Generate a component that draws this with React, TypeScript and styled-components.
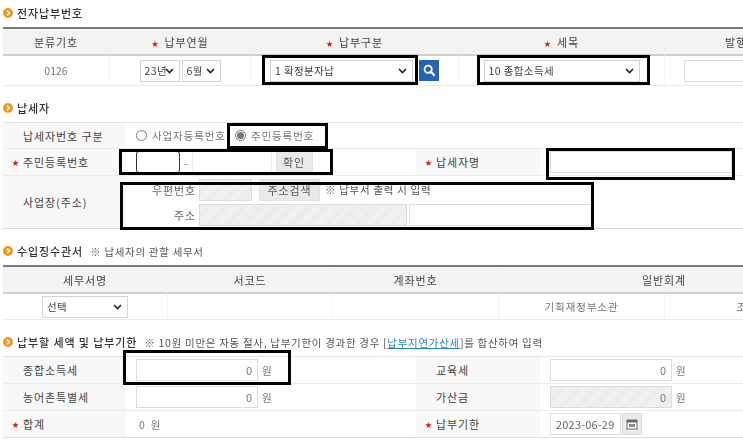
import React from "react";
import styled, { createGlobalStyle } from "styled-components";

const Global = createGlobalStyle`
  html, body { margin: 0; padding: 0; overflow: hidden; background: #fff; width: 743px; height: 442px; }
  * { box-sizing: border-box; }
`;

const Page = styled.div`
  position: relative;
  width: 743px;
  height: 442px;
  overflow: hidden;
  padding: 6px 0 0 3px;
  font-family: "Noto Sans CJK KR", "Noto Sans", sans-serif;
  font-size: 11px;
  letter-spacing: 0.9px;
  color: #666;
  filter: blur(0.35px);
`;

const Section = styled.section`
  width: 827px;
  margin-bottom: 15px;
`;

const Heading = styled.div`
  display: flex;
  align-items: center;
  height: 14px;
  margin-bottom: 7px;
  white-space: nowrap;
`;

const Bullet = styled.svg`
  width: 10px;
  height: 10px;
  margin-right: 4px;
  flex: none;
`;

const Title = styled.strong`
  font-size: 11px;
  font-weight: 500;
  color: #333;
  margin-right: 7px;
`;

const Note = styled.span`
  font-size: 10.5px;
  letter-spacing: 0.7px;
  color: #555;
`;

const Link = styled.a`
  color: #2b86b8;
  text-decoration: underline;
`;

const Table = styled.table<{ $strong?: boolean }>`
  width: 827px;
  table-layout: fixed;
  border-collapse: separate;
  border-spacing: 0;
  border-top: ${(p) => (p.$strong ? "2px solid #7b7b7b" : "1px solid #e3e3e3")};
`;

const Col = styled.col<{ $w: number }>`
  width: ${(p) => p.$w}px;
`;

const HeadCell = styled.th`
  height: 27px;
  padding: 0;
  background: #f4f3f2;
  border-bottom: 2px solid #cfcfcf;
  border-right: 1px solid #efefef;
  font-size: 11px;
  font-weight: 400;
  color: #444;
  text-align: center;
`;

const BodyCell = styled.td<{ $h?: number }>`
  height: ${(p) => p.$h ?? 30}px;
  padding: 0;
  border-bottom: 1px solid #ececec;
  border-right: 1px solid #f5f5f5;
  text-align: center;
  font-size: 10.5px;
  color: #777;
`;

const CodeText = styled.span`
  letter-spacing: 0;
`;

const RowHead = styled.th<{ $h?: number; $end?: boolean }>`
  height: ${(p) => p.$h ?? 27}px;
  padding: 0 0 0 20px;
  position: relative;
  background: #f8f8f8;
  border-bottom: 1px solid ${(p) => (p.$end ? "#dcdcdc" : "#ececec")};
  font-size: 11px;
  font-weight: 400;
  color: #444;
  text-align: left;
`;

const RowCell = styled.td<{ $end?: boolean }>`
  padding: 0 0 0 10px;
  border-bottom: 1px solid ${(p) => (p.$end ? "#dcdcdc" : "#ececec")};
  color: #777;
  font-size: 10.5px;
`;

const Inline = styled.div<{ $gap?: number }>`
  display: flex;
  align-items: center;
  gap: ${(p) => p.$gap ?? 2}px;
  white-space: nowrap;
`;

const Centered = styled(Inline)`
  justify-content: center;
`;

const Star = styled.span<{ $inline?: boolean }>`
  color: #d9161c;
  font-size: 7px;
  margin-right: 5px;
  vertical-align: 1px;
  ${(p) => (p.$inline ? "" : "position: absolute; left: 9px; top: 50%; transform: translateY(-50%); margin: 0;")}
`;

const chevron =
  "url(\"data:image/svg+xml,%3Csvg xmlns='http://www.w3.org/2000/svg' width='9' height='6'%3E%3Cpath d='M1 1l3.5 3.5L8 1' fill='none' stroke='%23222' stroke-width='1.6'/%3E%3C/svg%3E\")";

const Select = styled.select<{ $w: number; $shift?: number }>`
  appearance: none;
  width: ${(p) => p.$w}px;
  height: 22px;
  margin-left: ${(p) => p.$shift ?? 0}px;
  border: 1px solid #d4d4d4;
  border-radius: 0;
  background: #fff ${chevron} no-repeat right 5px center;
  font-family: inherit;
  font-size: 10.5px;
  letter-spacing: 0.4px;
  color: #444;
  padding: 0 0 0 4px;
  outline: none;
`;

const TextBox = styled.div<{ $w: number; $focus?: boolean; $hatch?: boolean; $plain?: boolean; $shift?: number }>`
  width: ${(p) => p.$w}px;
  height: 22px;
  margin-left: ${(p) => p.$shift ?? 0}px;
  flex: none;
  display: flex;
  align-items: center;
  justify-content: flex-end;
  padding-right: 4px;
  font-size: 11px;
  color: #777;
  border: ${(p) => (p.$focus ? "1px solid #333" : p.$plain ? "1px solid #eee" : "1px solid #dcdcdc")};
  border-radius: ${(p) => (p.$focus ? "3px" : "0")};
  background: ${(p) =>
    p.$hatch
      ? "repeating-linear-gradient(135deg, #f4f4f4 0 1px, #e9e9e9 1px 2px)"
      : "#fff"};
`;

const DateBox = styled(TextBox)`
  justify-content: flex-start;
  padding: 0 0 0 5px;
  color: #666;
  letter-spacing: 0.2px;
`;

const GrayButton = styled.div<{ $w: number }>`
  width: ${(p) => p.$w}px;
  height: 22px;
  flex: none;
  display: flex;
  align-items: center;
  justify-content: center;
  background: #e9e9e9;
  border: 1px solid #e2e2e2;
  font-size: 11px;
  color: #555;
`;

const IconButton = styled.div`
  width: 20px;
  height: 21px;
  flex: none;
  display: flex;
  align-items: center;
  justify-content: center;
  background: #2862b2;
`;

const CalendarButton = styled(GrayButton)`
  background: #eaeaea;
  border-color: #dcdcdc;
`;

const Radio = styled.span<{ $on?: boolean }>`
  width: 11px;
  height: 11px;
  flex: none;
  border-radius: 50%;
  border: 1px solid #777;
  background: #fff;
  display: inline-flex;
  align-items: center;
  justify-content: center;
  &::after {
    content: "";
    width: 7px;
    height: 7px;
    border-radius: 50%;
    background: ${(p) => (p.$on ? "#777" : "transparent")};
  }
`;

const RadioLabel = styled.span`
  margin: 0 9px 0 5px;
  color: #777;
`;

const AddressGrid = styled.div`
  display: grid;
  grid-template-columns: 73px 1fr;
  row-gap: 3px;
  align-items: center;
  margin-left: -10px;
`;

const AddressLabel = styled.span`
  text-align: right;
  padding-right: 3px;
  color: #666;
  font-size: 11px;
`;

const Unit = styled.span`
  color: #777;
  margin-left: 2px;
`;

const Dash = styled.span`
  margin-right: -1px;
`;

const AddressNote = styled(Note)`
  margin-left: -2px;
`;

const Total = styled(Inline)`
  padding-left: 3px;
`;

const Mark = styled.div<{ $x: number; $y: number; $w: number; $h: number }>`
  position: absolute;
  left: ${(p) => p.$x}px;
  top: ${(p) => p.$y}px;
  width: ${(p) => p.$w}px;
  height: ${(p) => p.$h}px;
  border: 3px solid #000;
  pointer-events: none;
`;

const Dot = () => (
  <Bullet viewBox="0 0 10 10">
    <circle cx="5" cy="5" r="5" fill="#ee9a1f" />
    <path d="M4 2.6 6.4 5 4 7.4" fill="none" stroke="#fff" strokeWidth="1.5" />
  </Bullet>
);

const marks = [
  { x: 262, y: 55, w: 156, h: 30 },
  { x: 477, y: 55, w: 173, h: 30 },
  { x: 227, y: 123, w: 101, h: 26 },
  { x: 119, y: 149, w: 214, h: 26 },
  { x: 546, y: 148, w: 189, h: 32 },
  { x: 120, y: 182, w: 474, h: 48 },
  { x: 123, y: 350, w: 168, h: 35 },
];

export default function App() {
  return (
    <Page>
      <Global />
      <Section>
        <Heading>
          <Dot />
          <Title>전자납부번호</Title>
        </Heading>
        <Table $strong>
          <colgroup>
            <Col $w={107} />
            <Col $w={141} />
            <Col $w={208} />
            <Col $w={206} />
            <Col $w={165} />
          </colgroup>
          <thead>
            <tr>
              <HeadCell>분류기호</HeadCell>
              <HeadCell><Star $inline>★</Star>납부연월</HeadCell>
              <HeadCell><Star $inline>★</Star>납부구분</HeadCell>
              <HeadCell><Star $inline>★</Star>세목</HeadCell>
              <HeadCell>발행번호</HeadCell>
            </tr>
          </thead>
          <tbody>
            <tr>
              <BodyCell><CodeText>0126</CodeText></BodyCell>
              <BodyCell>
                <Centered>
                  <Select $w={40} defaultValue="23"><option value="23">23년</option></Select>
                  <Select $w={39} defaultValue="6"><option value="6">6월</option></Select>
                </Centered>
              </BodyCell>
              <BodyCell>
                <Inline $gap={6}>
                  <Select $w={143} $shift={19} defaultValue="1"><option value="1">1 확정분자납</option></Select>
                  <IconButton>
                    <svg width="13" height="13" viewBox="0 0 13 13">
                      <circle cx="5.2" cy="5.2" r="3.6" fill="none" stroke="#fff" strokeWidth="1.8" />
                      <path d="M8 8l3.6 3.6" stroke="#fff" strokeWidth="2.2" />
                    </svg>
                  </IconButton>
                </Inline>
              </BodyCell>
              <BodyCell>
                <Centered>
                  <Select $w={156} defaultValue="10"><option value="10">10 종합소득세</option></Select>
                </Centered>
              </BodyCell>
              <BodyCell>
                <Inline><TextBox $w={120} $shift={19} /></Inline>
              </BodyCell>
            </tr>
          </tbody>
        </Table>
      </Section>

      <Section>
        <Heading>
          <Dot />
          <Title>납세자</Title>
        </Heading>
        <Table>
          <colgroup>
            <Col $w={123} />
            <Col $w={290} />
            <Col $w={124} />
            <Col $w={290} />
          </colgroup>
          <tbody>
            <tr>
              <RowHead $h={26}>납세자번호 구분</RowHead>
              <RowCell colSpan={3}>
                <Inline $gap={0}>
                  <Radio />
                  <RadioLabel>사업자등록번호</RadioLabel>
                  <Radio $on />
                  <RadioLabel>주민등록번호</RadioLabel>
                </Inline>
              </RowCell>
            </tr>
            <tr>
              <RowHead $h={27}><Star>★</Star>주민등록번호</RowHead>
              <RowCell>
                <Inline $gap={4}>
                  <TextBox $w={44} $focus />
                  <Dash>-</Dash>
                  <TextBox $w={80} $plain />
                  <GrayButton $w={37}>확인</GrayButton>
                </Inline>
              </RowCell>
              <RowHead $h={27}><Star>★</Star>납세자명</RowHead>
              <RowCell>
                <TextBox $w={182} />
              </RowCell>
            </tr>
            <tr>
              <RowHead $h={53} $end>사업장(주소)</RowHead>
              <RowCell colSpan={3} $end>
                <AddressGrid>
                  <AddressLabel>우편번호</AddressLabel>
                  <Inline $gap={7}>
                    <TextBox $w={53} $hatch />
                    <GrayButton $w={61}>주소검색</GrayButton>
                    <AddressNote>※ 납부서 출력 시 입력</AddressNote>
                  </Inline>
                  <AddressLabel>주소</AddressLabel>
                  <Inline>
                    <TextBox $w={208} $hatch />
                    <TextBox $w={183} />
                  </Inline>
                </AddressGrid>
              </RowCell>
            </tr>
          </tbody>
        </Table>
      </Section>

      <Section>
        <Heading>
          <Dot />
          <Title>수입징수관서</Title>
          <Note>※ 납세자의 관할 세무서</Note>
        </Heading>
        <Table $strong>
          <colgroup>
            <Col $w={165} />
            <Col $w={165} />
            <Col $w={166} />
            <Col $w={166} />
            <Col $w={165} />
          </colgroup>
          <thead>
            <tr>
              <HeadCell>세무서명</HeadCell>
              <HeadCell>서코드</HeadCell>
              <HeadCell>계좌번호</HeadCell>
              <HeadCell colSpan={2}>일반회계</HeadCell>
            </tr>
          </thead>
          <tbody>
            <tr>
              <BodyCell $h={26}>
                <Centered><Select $w={86} defaultValue="0"><option value="0">선택</option></Select></Centered>
              </BodyCell>
              <BodyCell $h={26} />
              <BodyCell $h={26} />
              <BodyCell $h={26}>기획재정부소관</BodyCell>
              <BodyCell $h={26}>조세</BodyCell>
            </tr>
          </tbody>
        </Table>
      </Section>

      <Section>
        <Heading>
          <Dot />
          <Title>납부할 세액 및 납부기한</Title>
          <Note>※ 10원 미만은 자동 절사, 납부기한이 경과한 경우 [<Link>납부지연가산세</Link>]를 합산하여 입력</Note>
        </Heading>
        <Table>
          <colgroup>
            <Col $w={123} />
            <Col $w={290} />
            <Col $w={124} />
            <Col $w={290} />
          </colgroup>
          <tbody>
            <tr>
              <RowHead>종합소득세</RowHead>
              <RowCell><Inline><TextBox $w={122}>0</TextBox><Unit>원</Unit></Inline></RowCell>
              <RowHead>교육세</RowHead>
              <RowCell><Inline><TextBox $w={122}>0</TextBox><Unit>원</Unit></Inline></RowCell>
            </tr>
            <tr>
              <RowHead>농어촌특별세</RowHead>
              <RowCell><Inline><TextBox $w={122}>0</TextBox><Unit>원</Unit></Inline></RowCell>
              <RowHead>가산금</RowHead>
              <RowCell><Inline><TextBox $w={122} $hatch>0</TextBox><Unit>원</Unit></Inline></RowCell>
            </tr>
            <tr>
              <RowHead $end><Star>★</Star>합계</RowHead>
              <RowCell $end><Total $gap={5}><span>0</span><span>원</span></Total></RowCell>
              <RowHead $end><Star>★</Star>납부기한</RowHead>
              <RowCell $end>
                <Inline $gap={1}>
                  <DateBox $w={71}>2023-06-29</DateBox>
                  <CalendarButton $w={20}>
                    <svg width="12" height="11" viewBox="0 0 12 11">
                      <rect x="1" y="1" width="10" height="9" fill="#fff" stroke="#666" />
                      <rect x="1" y="1" width="10" height="2.5" fill="#666" />
                      <rect x="3" y="5" width="6" height="3" fill="#888" />
                    </svg>
                  </CalendarButton>
                </Inline>
              </RowCell>
            </tr>
          </tbody>
        </Table>
      </Section>

      {marks.map((m) => (
        <Mark key={`${m.x}-${m.y}`} $x={m.x} $y={m.y} $w={m.w} $h={m.h} />
      ))}
    </Page>
  );
}
